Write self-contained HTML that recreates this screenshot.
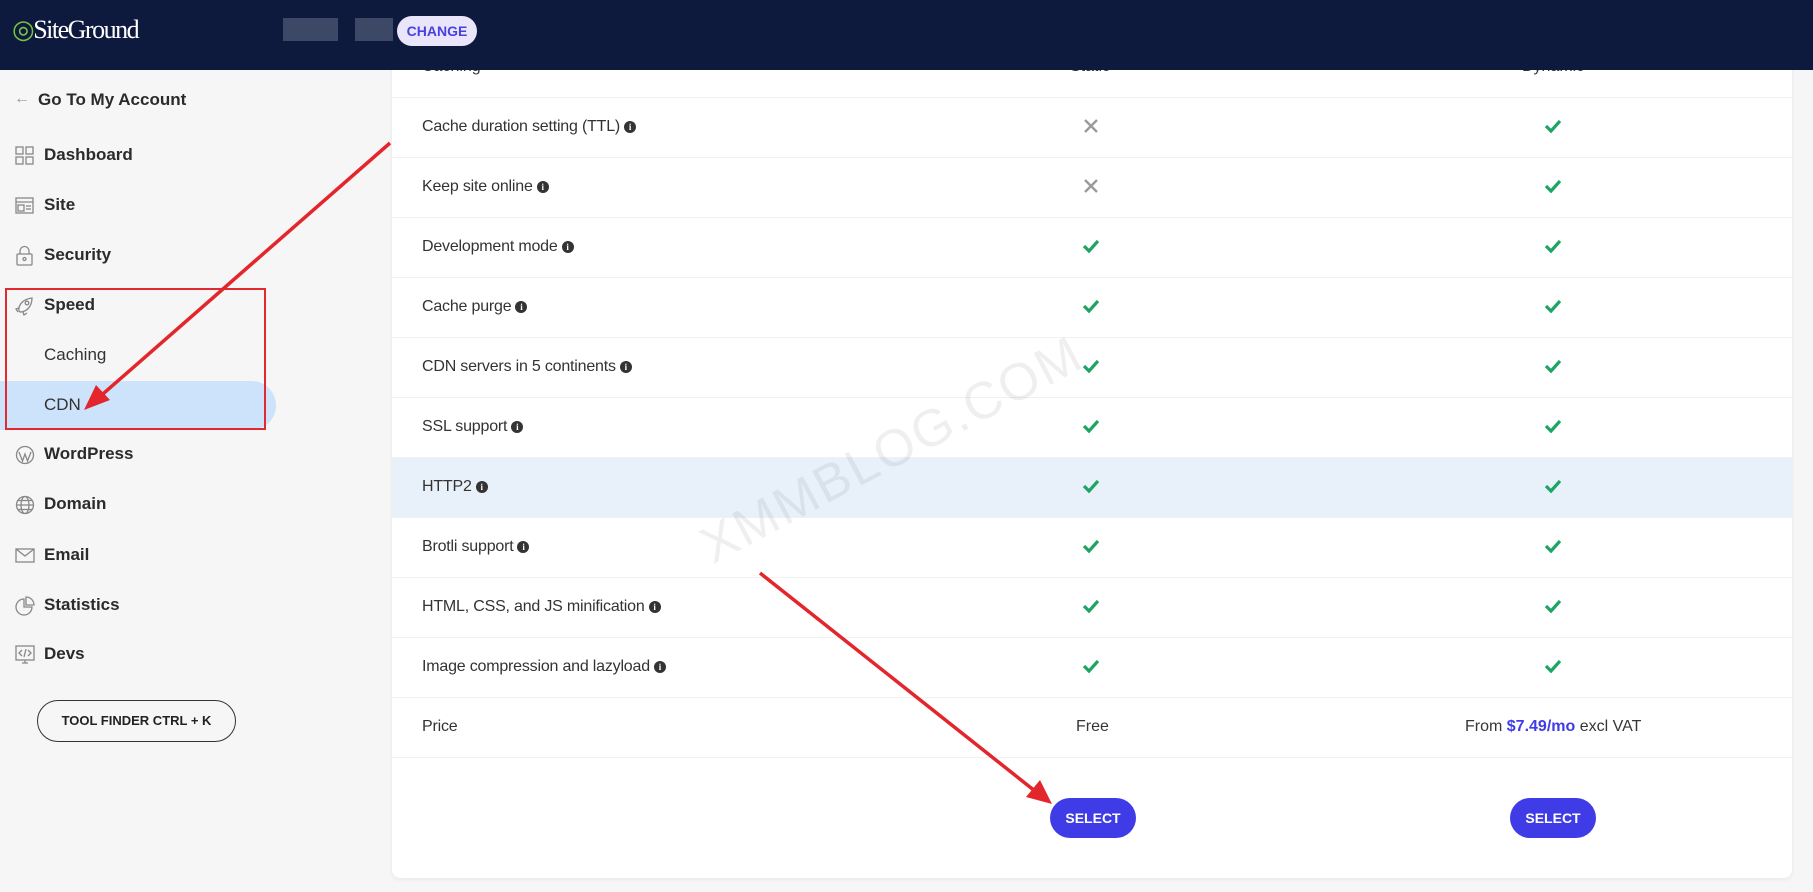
<!DOCTYPE html>
<html><head><meta charset="utf-8">
<style>
*{margin:0;padding:0;box-sizing:border-box}
body{width:1813px;height:892px;background:#f6f6f6;font-family:"Liberation Sans",sans-serif;position:relative;overflow:hidden;color:#363636}
.hdr{position:absolute;left:0;top:0;width:1813px;height:70px;background:#0e1a3d;z-index:5}
.logo{position:absolute;left:12px;top:15px;font-family:"Liberation Serif",serif;font-size:26px;color:#fff;letter-spacing:-1.5px}
.blur{position:absolute;background:#4a5470;opacity:.8}
.chg{position:absolute;left:397px;top:16px;width:80px;height:30px;border-radius:15px;background:#e9e6fb;color:#4a3fe0;font-weight:bold;font-size:14px;text-align:center;line-height:30px}
.nav{position:absolute;left:44px;font-weight:bold;font-size:17px;color:#2b2b2b}
.ic{position:absolute;left:15px}
.sub{position:absolute;left:44px;font-size:17px;color:#333}
.card{position:absolute;left:392px;top:40px;width:1400px;height:838px;background:#fff;border-radius:8px;box-shadow:0 1px 4px rgba(0,0,0,.08)}
.row{position:absolute;left:392px;width:1400px;height:60px;border-top:1.5px solid #f1f1f1}
.row .l{position:absolute;left:30px;top:0;line-height:58px;font-size:16px;color:#333;letter-spacing:-0.2px}
.i{display:inline-block;width:12px;height:12px;border-radius:50%;background:#333;color:#fff;font-size:9px;line-height:12px;text-align:center;font-weight:bold;vertical-align:1px;margin-left:4px;font-family:"Liberation Serif",serif}
.ck{position:absolute;top:19px;width:18px;height:18px}
.btn{position:absolute;top:798px;width:86px;height:40px;border-radius:20px;background:#3f3be6;color:#fff;font-weight:bold;font-size:14px;text-align:center;line-height:40px}
</style></head><body>
<div class="hdr">
 <div class="logo"><span style="color:#7bc142">&#x25CE;</span>SiteGround</div>
 <div class="blur" style="left:283px;top:18px;width:55px;height:23px"></div>
 <div class="blur" style="left:355px;top:18px;width:38px;height:23px"></div>
 <div class="chg">CHANGE</div>
</div>

<div style="position:absolute;left:14px;top:90px;color:#999;font-size:16px">&larr;</div>
<div class="nav" style="left:38px;top:90px">Go To My Account</div>
<svg class="ic" style="top:146px" width="20" height="20"><g fill="none" stroke="#888" stroke-width="1.3"><rect x="1" y="1" width="7" height="7"/><rect x="11" y="1" width="7" height="7"/><rect x="1" y="11" width="7" height="7"/><rect x="11" y="11" width="7" height="7"/></g></svg>
<div class="nav" style="top:145px">Dashboard</div>
<svg class="ic" style="top:196px" width="20" height="20"><g fill="none" stroke="#888" stroke-width="1.3"><rect x="1" y="2" width="17" height="15"/><line x1="1" y1="6" x2="18" y2="6"/><rect x="3" y="9" width="6" height="6"/><line x1="11" y1="10" x2="16" y2="10"/><line x1="11" y1="13" x2="16" y2="13"/></g></svg>
<div class="nav" style="top:195px">Site</div>
<svg class="ic" style="top:245px" width="20" height="22"><g fill="none" stroke="#888" stroke-width="1.3"><rect x="2" y="9" width="15" height="11" rx="1"/><path d="M5 9V6a4.5 4.5 0 0 1 9 0v3"/><circle cx="9.5" cy="14" r="1.5"/></g></svg>
<div class="nav" style="top:245px">Security</div>
<svg class="ic" style="top:296px" width="20" height="20"><g fill="none" stroke="#888" stroke-width="1.3"><path d="M4 15C3 9 8 3 17 2c0 9-6 14-12 14z"/><circle cx="12" cy="7" r="1.8"/><path d="M4 12l-3 1 2 3M8 16l1 3 3-2"/></g></svg>
<div class="nav" style="top:295px">Speed</div>
<div class="sub" style="top:345px">Caching</div>
<div style="position:absolute;left:0;top:381px;width:276px;height:49px;background:#cde2fb;border-radius:0 25px 25px 0"></div>
<div class="sub" style="top:395px">CDN</div>
<div style="position:absolute;left:5px;top:288px;width:261px;height:142px;border:2px solid #e02a2f"></div>
<svg class="ic" style="top:445px" width="20" height="20"><g fill="none" stroke="#888" stroke-width="1.3"><circle cx="10" cy="10" r="8.5"/><path d="M4 7l3.5 9 2.5-7 2.5 7 3.5-9"/></g></svg>
<div class="nav" style="top:444px">WordPress</div>
<svg class="ic" style="top:495px" width="20" height="20"><g fill="none" stroke="#888" stroke-width="1.3"><circle cx="10" cy="10" r="8.5"/><ellipse cx="10" cy="10" rx="4" ry="8.5"/><line x1="1.5" y1="10" x2="18.5" y2="10"/><line x1="3" y1="5.5" x2="17" y2="5.5"/><line x1="3" y1="14.5" x2="17" y2="14.5"/></g></svg>
<div class="nav" style="top:494px">Domain</div>
<svg class="ic" style="top:548px" width="20" height="16"><g fill="none" stroke="#888" stroke-width="1.3"><rect x="1" y="1" width="18" height="13"/><path d="M1 1l9 7 9-7"/></g></svg>
<div class="nav" style="top:545px">Email</div>
<svg class="ic" style="top:596px" width="20" height="20"><g fill="none" stroke="#888" stroke-width="1.3"><path d="M9 3a8 8 0 1 0 8 8H9z"/><path d="M11 1v8h8a8 8 0 0 0-8-8z"/></g></svg>
<div class="nav" style="top:595px">Statistics</div>
<svg class="ic" style="top:645px" width="20" height="20"><g fill="none" stroke="#888" stroke-width="1.3"><rect x="1" y="1" width="18" height="14"/><path d="M7 5l-3 3 3 3M13 5l3 3-3 3M11 4l-2 8M7 18h6M10 15v3"/></g></svg>
<div class="nav" style="top:644px">Devs</div>
<div style="position:absolute;left:37px;top:700px;width:199px;height:42px;border:1.5px solid #333;border-radius:21px;text-align:center;line-height:39px;font-weight:bold;font-size:13px;color:#222">TOOL FINDER CTRL + K</div>

<div class="card"></div>
<div style="position:absolute;left:422px;top:58px;font-size:16px;color:#333">Caching</div>
<div style="position:absolute;left:1070px;top:58px;font-size:16px;color:#333">Static</div>
<div style="position:absolute;left:1522px;top:58px;font-size:16px;color:#333">Dynamic</div>

<div id="rows"></div>
<script>
var labels=["Cache duration setting (TTL)","Keep site online","Development mode","Cache purge","CDN servers in 5 continents","SSL support","HTTP2","Brotli support","HTML, CSS, and JS minification","Image compression and lazyload"];
var h='';
var ck='<svg viewBox="0 0 18 18"><path d="M2 9l5 5 9-10" fill="none" stroke="#1fa463" stroke-width="3.2"/></svg>';
var x='<svg viewBox="0 0 18 18"><path d="M3 3l12 12M15 3L3 15" fill="none" stroke="#9a9a9a" stroke-width="2.4"/></svg>';
for(var i=0;i<10;i++){var t=97+60*i;
h+='<div class="row" style="top:'+t+'px;'+(i==6?'background:#e8f1fa;':'')+'"><div class="l">'+labels[i]+'<span class="i">i</span></div>'+
'<div class="ck" style="left:690px">'+(i<2?x:ck)+'</div><div class="ck" style="left:1152px">'+ck+'</div></div>';}
h+='<div class="row" style="top:697px"><div class="l">Price</div><div style="position:absolute;left:684px;line-height:58px;font-size:16px">Free</div><div style="position:absolute;left:1073px;line-height:58px;font-size:16px">From <b style="color:#3f3be6">$7.49/mo</b> excl VAT</div></div>';
h+='<div class="row" style="top:757px;height:2px"></div>';
document.getElementById('rows').innerHTML=h;
</script>
<div class="btn" style="left:1050px">SELECT</div>
<div class="btn" style="left:1510px">SELECT</div>

<div style="position:absolute;left:680px;top:420px;transform:rotate(-28deg);font-size:52px;color:#000;opacity:.06;letter-spacing:2px">XMMBLOG.COM</div>

<svg style="position:absolute;left:0;top:0;z-index:6" width="1813" height="892">
<g stroke="#e3262c" stroke-width="3.5" fill="#e3262c">
<line x1="390" y1="143" x2="96" y2="400"/>
<polygon points="84,410 96,385 110,400" stroke="none"/>
<line x1="760" y1="573" x2="1040" y2="795"/>
<polygon points="1052,804 1026,797 1040,780" stroke="none"/>
</g></svg>
</body></html>
